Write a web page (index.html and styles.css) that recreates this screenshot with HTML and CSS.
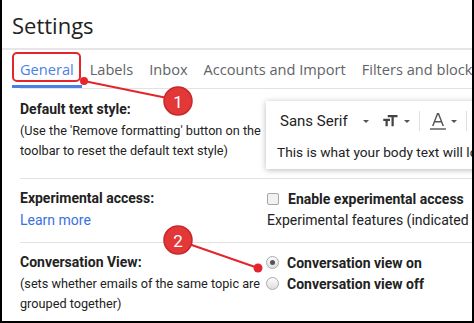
FILE: index.html
```html
<!DOCTYPE html>
<html lang="en">
<head>
    <meta charset="UTF-8">
    <meta name="viewport" content="width=device-width, initial-scale=1.0">
    <title>Settings</title>
    <link rel="stylesheet" href="styles.css">
</head>
<body>
    <div class="frame">
        <h1 class="title">Settings</h1>

        <div class="tabs">
            <div class="tab active">General</div>
            <div class="tab">Labels</div>
            <div class="tab">Inbox</div>
            <div class="tab">Accounts and Import</div>
            <div class="tab">Filters and blocked addresses</div>
        </div>
        <div class="tabs-line"></div>

        <!-- Default text style -->
        <div class="row row-first">
            <div class="row-label">
                <div class="label">Default text style:</div>
                <div class="hint">(Use the 'Remove formatting' button on the<br>toolbar to reset the default text style)</div>
            </div>
            <div class="row-value">
                <div class="style-box">
                    <div class="toolbar">
                        <span class="font-name">Sans Serif</span>
                        <span class="caret caret-wide"></span>
                        <svg class="tool-icon" width="18" height="18" viewBox="0 0 24 24">
                            <path d="M9 4v3h5v12h3V7h5V4H9zm-6 8h3v7h3v-7h3V9H3v3z" fill="#444"/>
                        </svg>
                        <span class="caret"></span>
                        <span class="divider"></span>
                        <svg class="tool-icon" width="16" height="20" viewBox="0 0 16 20">
                            <path d="M7 2L2 15h1.6l1.3-3.6h6.2L12.4 15H14L9 2H7zm-1.6 8L8 3.4 10.6 10H5.4z" fill="#555"/>
                            <rect x="0" y="17" width="16" height="2" fill="#888"/>
                        </svg>
                        <span class="caret"></span>
                        <span class="divider"></span>
                    </div>
                    <div class="preview">This is what your body text will look like.</div>
                </div>
            </div>
        </div>

        <!-- Experimental access -->
        <div class="row">
            <div class="row-label">
                <div class="label">Experimental access:</div>
                <a class="link" href="#">Learn more</a>
            </div>
            <div class="row-value">
                <div class="option">
                    <span class="checkbox"></span>
                    <span class="option-text">Enable experimental access</span>
                </div>
                <div class="note">Experimental features (indicated with a flask)</div>
            </div>
        </div>

        <!-- Conversation view -->
        <div class="row row-last">
            <div class="row-label">
                <div class="label">Conversation View:</div>
                <div class="hint">(sets whether emails of the same topic are<br>grouped together)</div>
            </div>
            <div class="row-value">
                <div class="option">
                    <span class="radio checked"></span>
                    <span class="option-text">Conversation view on</span>
                </div>
                <div class="option">
                    <span class="radio"></span>
                    <span class="option-text">Conversation view off</span>
                </div>
            </div>
        </div>

        <!-- callouts drawn over the page -->
        <svg class="callouts" width="474" height="323" viewBox="0 0 474 323">
            <rect x="13" y="53" width="67" height="28" rx="4" fill="none" stroke="#e4252b" stroke-width="2"/>
            <line x1="84" y1="81" x2="172" y2="99" stroke="#e4252b" stroke-width="2"/>
            <circle cx="84" cy="81" r="4" fill="#e4252b"/>
            <circle cx="178" cy="101" r="14" fill="#e23838" stroke="#c9262a" stroke-width="1.5"/>
            <text x="178" y="107.5" class="badge-text">1</text>

            <line x1="186" y1="243" x2="258" y2="268" stroke="#e4252b" stroke-width="2"/>
            <circle cx="258" cy="268" r="4.5" fill="#e4252b"/>
            <circle cx="178" cy="240" r="14" fill="#e23838" stroke="#c9262a" stroke-width="1.5"/>
            <text x="178" y="246.5" class="badge-text">2</text>
        </svg>
    </div>
</body>
</html>
```

FILE: styles.css
```css
* {
    margin: 0;
    padding: 0;
    box-sizing: border-box;
}

body {
    font-family: 'Roboto', 'Liberation Sans', sans-serif;
    background: white;
    color: #222;
}

.frame {
    position: relative;
    width: 474px;
    height: 323px;
    border-left: 2px solid #000;
    border-right: 2px solid #000;
    border-bottom: 2px solid #000;
    overflow: hidden;
}

.title {
    height: 48px;
    padding: 2px 0 0 10px;
    font-family: 'Open Sans', 'Roboto', sans-serif;
    font-size: 22px;
    font-weight: 400;
    line-height: 46px;
    color: #222;
}

.tabs {
    display: flex;
    border-top: 2px solid #e6e6e6;
    padding-left: 10px;
    white-space: nowrap;
}

.tab {
    height: 38px;
    padding: 3px 8px 0;
    display: flex;
    align-items: center;
    border-bottom: 3px solid transparent;
    font-family: 'Open Sans', 'Roboto', sans-serif;
    font-size: 14.6px;
    color: #5f6368;
}

.tab.active {
    color: #4a7fe8;
    border-bottom-color: #4a7fe8;
}

.tabs-line {
    height: 1px;
    margin-left: 18px;
    background: #e2e2e2;
}

.row {
    display: flex;
    margin-left: 18px;
    padding: 9px 0 12px;
    border-bottom: 1px solid #e2e2e2;
}

.row-first {
    padding: 10px 0 9px;
}

.row-last {
    border-bottom: none;
}

.row-label {
    width: 246px;
    flex-shrink: 0;
    white-space: nowrap;
}

.row-value {
    flex: 1;
    white-space: nowrap;
}

.label {
    font-size: 14px;
    font-weight: 700;
    line-height: 20px;
}

.hint {
    margin-top: 2px;
    font-size: 12.7px;
    line-height: 20px;
    color: #222;
}

.link {
    display: block;
    margin-top: 2px;
    font-size: 14px;
    line-height: 20px;
    color: #3b6fe2;
    text-decoration: none;
}

.style-box {
    width: 260px;
    height: 68px;
    margin-top: 2px;
    padding: 0 0 0 11px;
    background: white;
    box-shadow: 0 1px 6px rgba(0,0,0,0.28);
}

.toolbar {
    display: flex;
    align-items: center;
    height: 40px;
    padding-left: 3px;
}

.font-name {
    font-size: 15px;
    color: #222;
}

.caret {
    width: 0;
    height: 0;
    margin: 0 9px 0 5px;
    border-left: 3px solid transparent;
    border-right: 3px solid transparent;
    border-top: 3px solid #555;
}

.caret-wide {
    margin: 0 12px 0 15px;
}

.divider {
    width: 1px;
    height: 20px;
    margin-right: 10px;
    background: #e0e0e0;
}

.preview {
    margin-top: 1px;
    font-size: 13.7px;
    line-height: 20px;
    color: #222;
}

.option {
    display: flex;
    align-items: center;
    height: 21px;
}

.option-text {
    font-size: 14px;
    font-weight: 700;
    color: #222;
}

.checkbox {
    width: 12px;
    height: 12px;
    margin: 0 9px 0 1px;
    border: 1px solid #a8a8a8;
    border-radius: 2px;
    background: #f1f1f1;
}

.note {
    margin-top: 1px;
    font-size: 14px;
    line-height: 20px;
    padding-left: 1px;
    color: #222;
}

.radio {
    position: relative;
    width: 13px;
    height: 13px;
    margin: 0 8px 0 0;
    border: 1px solid #ababab;
    border-radius: 50%;
    background: linear-gradient(#fdfdfd, #dedede);
}

.radio.checked::after {
    content: '';
    position: absolute;
    left: 3px;
    top: 3px;
    width: 5px;
    height: 5px;
    border-radius: 50%;
    background: #555;
}

.callouts {
    position: absolute;
    left: -2px;
    top: 0;
    pointer-events: none;
}

.badge-text {
    font-family: 'Roboto', sans-serif;
    font-size: 17px;
    fill: white;
    text-anchor: middle;
}
```
